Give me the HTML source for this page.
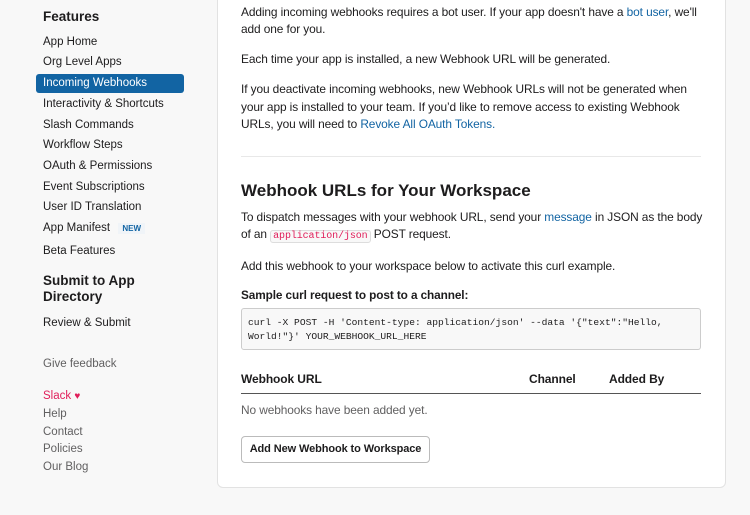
<html><head><style>
body{margin:0;width:750px;height:515px;background:#f8f8f8;font-family:"Liberation Sans",sans-serif;color:#1d1c1d;position:relative;overflow:hidden}
.a{position:absolute;white-space:nowrap}
.nav{font-size:11.5px;left:43px;color:#1d1c1d}
.h{font-weight:bold;font-size:13.5px;left:43px}
.p{font-size:11.9px;left:241px;letter-spacing:-0.1px}
a{color:#1264a3;text-decoration:none}
.g{color:#616061}
code{font-family:"Liberation Mono",monospace;font-size:10px;color:#e01e5a;background:#f8f8f8;border:1px solid #ddd;border-radius:3px;padding:0 2px}
</style></head><body>
<div class="a" style="left:217px;top:-10px;width:507px;height:496px;background:#fff;border:1px solid #e2e2e2;border-radius:6px"></div>
<div class="a h" style="top:9px">Features</div>
<div class="a nav" style="top:36px">App Home</div>
<div class="a nav" style="top:56px">Org Level Apps</div>
<div class="a" style="left:36px;top:74px;width:148px;height:19px;background:#1264a3;border-radius:3px"></div>
<div class="a nav" style="top:77px;color:#fff">Incoming Webhooks</div>
<div class="a nav" style="top:98px">Interactivity &amp; Shortcuts</div>
<div class="a nav" style="top:119px">Slash Commands</div>
<div class="a nav" style="top:139px">Workflow Steps</div>
<div class="a nav" style="top:160px">OAuth &amp; Permissions</div>
<div class="a nav" style="top:181px">Event Subscriptions</div>
<div class="a nav" style="top:201px">User ID Translation</div>
<div class="a nav" style="top:222px">App Manifest <span style="font-size:8px;font-weight:bold;color:#1264a3;background:#f0f4f8;padding:1px 4px;margin-left:5px">NEW</span></div>
<div class="a nav" style="top:245px">Beta Features</div>
<div class="a h" style="top:273px;line-height:16px">Submit to App<br>Directory</div>
<div class="a nav" style="top:317px">Review &amp; Submit</div>
<div class="a nav g" style="top:358px">Give feedback</div>
<div class="a nav" style="top:390px;color:#e01e5a">Slack <span style="font-size:10px">♥</span></div>
<div class="a nav g" style="top:408px">Help</div>
<div class="a nav g" style="top:426px">Contact</div>
<div class="a nav g" style="top:443px">Policies</div>
<div class="a nav g" style="top:461px">Our Blog</div>

<div class="a p" style="top:5px">Adding incoming webhooks requires a bot user. If your app doesn't have a <a>bot user</a>, we'll</div>
<div class="a p" style="top:22px">add one for you.</div>
<div class="a p" style="top:52px">Each time your app is installed, a new Webhook URL will be generated.</div>
<div class="a p" style="top:82px">If you deactivate incoming webhooks, new Webhook URLs will not be generated when</div>
<div class="a p" style="top:100px">your app is installed to your team. If you’d like to remove access to existing Webhook</div>
<div class="a p" style="top:117px">URLs, you will need to <a>Revoke All OAuth Tokens.</a></div>
<div class="a" style="left:241px;top:156px;width:460px;height:1px;background:#e8e8e8"></div>
<div class="a" style="left:241px;top:181px;font-size:17px;font-weight:bold">Webhook URLs for Your Workspace</div>
<div class="a p" style="top:210px">To dispatch messages with your webhook URL, send your <a>message</a> in JSON as the body</div>
<div class="a p" style="top:227px">of an <code>application/json</code> POST request.</div>
<div class="a p" style="top:259px">Add this webhook to your workspace below to activate this curl example.</div>
<div class="a p" style="top:288px;font-weight:bold;font-size:11.8px">Sample curl request to post to a channel:</div>
<div class="a" style="left:241px;top:308px;width:458px;height:40px;background:#f8f8f8;border:1px solid #ccc;border-radius:3px"></div>
<div class="a" style="left:248px;top:316px;font-family:'Liberation Mono',monospace;font-size:9.6px;line-height:14px;color:#1d1c1d">curl -X POST -H 'Content-type: application/json' --data '{"text":"Hello,<br>World!"}' YOUR_WEBHOOK_URL_HERE</div>
<div class="a p" style="top:372px;font-weight:bold;font-size:12px">Webhook URL</div>
<div class="a p" style="top:372px;left:529px;font-weight:bold;font-size:12px">Channel</div>
<div class="a p" style="top:372px;left:609px;font-weight:bold;font-size:12px">Added By</div>
<div class="a" style="left:241px;top:393px;width:460px;height:1px;background:#555"></div>
<div class="a p g" style="top:403px">No webhooks have been added yet.</div>
<div class="a" style="left:241px;top:436px;width:187px;height:25px;border:1px solid #bbb;border-radius:4px;background:#fff"></div>
<div class="a" style="left:241px;top:443px;width:189px;text-align:center;font-size:11px;font-weight:bold;letter-spacing:-0.1px">Add New Webhook to Workspace</div>
</body></html>
